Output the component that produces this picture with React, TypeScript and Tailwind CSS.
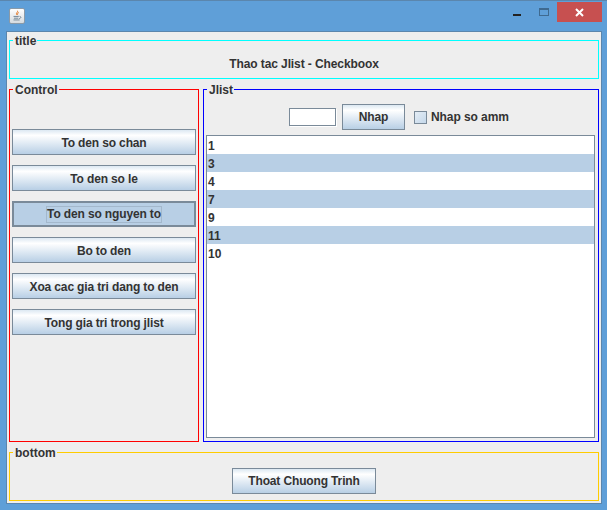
import React from 'react';

const GROUP_LABEL = 'absolute -top-[8px] left-[3px] bg-[#eeeeee] pl-[2px] pr-[1px] font-bold leading-[16px]';

const Group: React.FC<{ label: string; className: string; children: React.ReactNode }> = ({
  label,
  className,
  children,
}) => (
  <div className={`relative border bg-[#eeeeee] ${className}`}>
    <span className={GROUP_LABEL}>{label}</span>
    {children}
  </div>
);

const JButton: React.FC<{ label: string; className?: string }> = ({ label, className = 'w-full h-[26px] pt-[1px]' }) => (
  <button className={`flex items-center justify-center border border-[#7a8a99] bg-gradient-to-b from-[#dce8f2] via-[#ffffff] via-[22%] to-[#b8cfe5] font-bold tracking-[-0.14px] text-[#333333] ${className}`}>
    {label}
  </button>
);

const controls = ['To den so chan', 'To den so le', 'To den so nguyen to', 'Bo to den', 'Xoa cac gia tri dang to den', 'Tong gia tri trong jlist'];
const rows = [
  { value: '1', selected: false },
  { value: '3', selected: true },
  { value: '4', selected: false },
  { value: '7', selected: true },
  { value: '9', selected: false },
  { value: '11', selected: true },
  { value: '10', selected: false },
];

const JavaIcon = () => (
  <svg width="16" height="16" viewBox="0 0 16 16" className="rounded-[2px] border border-[#8a9aa8] bg-gradient-to-b from-[#ffffff] to-[#d5dbe0]">
    <path d="M8.500 2c1 1.500-2 2.500-1 4.500M10 4c-1.500 1-2 2-1 3" stroke="#e2711d" strokeWidth="1.100" fill="none" />
    <path d="M4 8.500h6M4.500 10.500h5M4 12.500h7M11 8.500c2 0 2 2-.5 2.500" stroke="#5a7184" strokeWidth="0.900" fill="none" />
  </svg>
);

export default function App() {
  return (
    <div className="flex h-[510px] w-[607px] flex-col overflow-hidden bg-[#5f9fd8] font-['Liberation_Sans',Arial,sans-serif] text-[12px] text-[#333333]">
      {/* Title bar */}
      <div className="flex h-[31px] shrink-0 items-start justify-between border-t border-[#5b86ad] pl-[9px] pr-[5px]">
        <div className="pt-[7px]"><JavaIcon /></div>
        <div className="flex items-start pt-[1px]">
          <div className="mr-[18px] mt-[12px] h-[2px] w-[8px] bg-[#222222]" />
          <div className="mr-[8px] mt-[6px] h-[8px] w-[10px] border border-t-2 border-[#3f6a90]" />
          <div className="flex h-[20px] w-[45px] items-center justify-center bg-[#c75050]">
            <svg width="9" height="9" viewBox="0 0 9 9">
              <path d="M1 1l7 7M8 1l-7 7" stroke="#ffffff" strokeWidth="2" />
            </svg>
          </div>
        </div>
      </div>

      {/* Window content */}
      <div className="ml-[6px] flex h-[473px] w-[596px] flex-col border border-[#5b86ad] bg-[#eeeeee] pl-[2px] pr-[2px] pt-[8px]">
        <Group label="title" className="flex h-[39px] w-[590px] shrink-0 items-center justify-center border-[#00ffff] pt-[8px]">
          <span className="font-bold tracking-[-0.1px]">Thao tac Jlist - Checkboox</span>
        </Group>

        <div className="mt-[10px] flex h-[353px] shrink-0 gap-[4px]">
          <Group label="Control" className="flex h-full w-[190px] flex-col gap-[10px] border-[#ff0000] px-[2px] pt-[39px]">
            {controls.map((label, i) =>
              i === 2 ? (
                <button key={label} className="flex h-[26px] w-full items-center justify-center border-2 border-[#7a8a99] bg-[#b8cfe5] font-bold tracking-[-0.14px] text-[#333333]">
                  <span className="border border-[#a3b8cc] leading-[15px]">{label}</span>
                </button>
              ) : (
                <JButton key={label} label={label} />
              ),
            )}
          </Group>

          <Group label="Jlist" className="flex h-full w-[396px] flex-col border-[#0000ff] px-[2px] pt-[14px]">
            <div className="flex h-[26px] shrink-0 items-center pl-[83px]">
              <div className="h-[18px] w-[47px] border border-[#7a8a99] bg-white shadow-[1px_1px_0_#ffffff]" />
              <JButton label="Nhap" className="ml-[6px] h-[26px] w-[63px]" />
              <div className="ml-[9px] h-[13px] w-[13px] border border-[#7a8a99] bg-gradient-to-br from-[#e4edf5] to-[#c5d8ea]" />
              <span className="ml-[4px] font-bold tracking-[-0.08px]">Nhap so amm</span>
            </div>
            <div className="mt-[5px] h-[303px] w-[389px] border border-[#7a8a99] bg-white font-bold">
              {rows.map((row) => (
                <div key={row.value} className={`h-[18px] pl-[1px] leading-[20px] ${row.selected ? 'bg-[#b8cfe5]' : ''}`}>
                  {row.value}
                </div>
              ))}
            </div>
          </Group>
        </div>

        <Group label="bottom" className="mt-[10px] flex h-[49px] w-[590px] shrink-0 items-center justify-center border-[#ffcc00] pt-[8px]">
          <JButton label="Thoat Chuong Trinh" className="h-[26px] w-[144px]" />
        </Group>
      </div>
    </div>
  );
}
